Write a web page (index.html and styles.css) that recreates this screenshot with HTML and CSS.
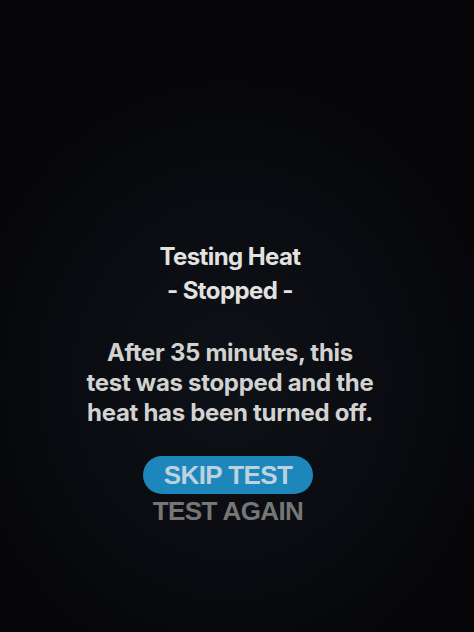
FILE: index.html
```html
<!DOCTYPE html>
<html>
<head>
<meta charset="utf-8">
<link rel="stylesheet" href="styles.css">
</head>
<body>
<main class="screen">
  <h1 class="title">Testing Heat<br>- Stopped -</h1>
  <p class="message">After 35 minutes, this<br>test was stopped and the<br>heat has been turned off.</p>
  <div class="actions">
    <button class="btn-primary">SKIP TEST</button>
    <button class="btn-secondary">TEST AGAIN</button>
  </div>
</main>
</body>
</html>
```
FILE: styles.css
```css
html, body {
  margin: 0;
  padding: 0;
}
body {
  width: 474px;
  height: 632px;
  overflow: hidden;
  background: radial-gradient(ellipse 280px 320px at 230px 380px, #0e1117 0%, #0a0c11 55%, #060609 100%);
  font-family: Inter, "Noto Sans", sans-serif;
}
.screen {
  display: flex;
  flex-direction: column;
  align-items: center;
  padding-top: 240px;
  padding-right: 14px;
}
.title {
  margin: 0;
  font-size: 24px;
  font-weight: 700;
  line-height: 34px;
  color: #e2e2e0;
  text-align: center;
  letter-spacing: -0.6px;
}
.message {
  margin: 30px 0 0;
  font-size: 24px;
  font-weight: 700;
  line-height: 30px;
  color: #d2d2d0;
  text-align: center;
  letter-spacing: -0.3px;
}
.actions {
  margin-top: 28px;
  display: flex;
  flex-direction: column;
  align-items: center;
}
.btn-primary {
  border: none;
  background: #1d87bb;
  color: #bcd2de;
  font-family: "Liberation Sans", Arial, sans-serif;
  font-weight: 700;
  font-size: 26px;
  letter-spacing: -0.6px;
  height: 38px;
  width: 170px;
  border-radius: 19px;
  padding: 0;
  line-height: 38px;
  margin-right: 4px;
}
.btn-secondary {
  border: none;
  background: none;
  color: #767676;
  font-family: "Liberation Sans", Arial, sans-serif;
  font-weight: 700;
  font-size: 26px;
  letter-spacing: -0.6px;
  padding: 0;
  line-height: 34px;
  margin-right: 4px;
}
```
